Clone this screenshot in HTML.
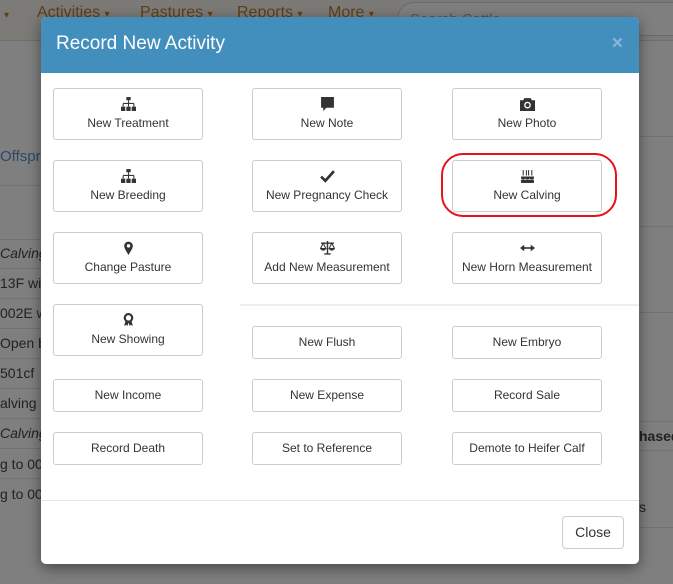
<!DOCTYPE html>
<html style="background:#7f7f7f"><head><style>
html,body{background:#7f7f7f}
body{margin:0;width:673px;height:584px;overflow:hidden;font-family:"Liberation Sans",sans-serif;position:relative}
.full{position:absolute;left:0;top:0;width:673px;height:584px;background:#7f7f7f}
.nav{position:absolute;left:0;top:0;width:673px;height:40px;background:#7c7a77;border-bottom:1px solid #6e6e6e}
.nav span{position:absolute;top:4px;color:#5e3f14;font-size:16px}
.search{position:absolute;left:397px;top:2px;width:300px;height:34px;border:1px solid #6a6a6a;border-radius:18px;background:#7f7f7f;color:#555;font-size:15px;line-height:34px;padding-left:12px;box-sizing:border-box}
.bg{position:absolute;font-size:14px;color:#222}
.ln{position:absolute;height:1px;background:#727272}
.modal{position:absolute;left:41px;top:17px;width:598px;height:547px;background:#fff;border-radius:5px;box-shadow:0 4px 14px rgba(0,0,0,.45);overflow:hidden}
.hd{height:56px;background:#428fbe;color:#fff;font-size:19px;line-height:54px;padding-left:15px;position:relative}
.x{position:absolute;right:16px;top:0;color:#8ab6d6;font-size:19px;font-weight:bold}
.b{position:absolute;width:148px;border:1px solid #ccc;border-radius:3px;background:#fff;text-align:center;font-size:12px;color:#333}
.b svg{display:block;margin:0 auto}
.tall{height:50px}
.tall svg{margin-top:8px;height:14px;width:15px}
.tall div{margin-top:5px}
.short{height:31px;line-height:31px}
.sep{position:absolute;left:199px;top:287px;width:399px;height:2px;background:#eee}
.ft{position:absolute;left:0;top:483px;width:598px;height:1px;background:#e5e5e5}
.close{position:absolute;left:521px;top:499px;width:60px;height:31px;border:1px solid #ccc;border-radius:4px;font-size:14px;line-height:31px;text-align:center;color:#333}
.red{position:absolute;left:441px;top:153px;width:172px;height:60px;border:2px solid #e3131b;border-radius:22px}
</style></head><body>
<div class="full"></div>
<div class="nav">
<span style="left:4px;font-size:10px;top:10px">▾</span>
<span style="left:37px">Activities <small style="font-size:10px">▾</small></span>
<span style="left:140px">Pastures <small style="font-size:10px">▾</small></span>
<span style="left:237px">Reports <small style="font-size:10px">▾</small></span>
<span style="left:328px">More <small style="font-size:10px">▾</small></span>
<div class="search">Search Cattle</div>
</div>
<div class="bg" style="left:0;top:148px;color:#2a4a66;font-size:15px">Offspr</div>
<div class="ln" style="left:0;top:185px;width:41px"></div>
<div class="ln" style="left:0;top:239px;width:41px"></div>
<div class="bg" style="left:0;top:245px;font-style:italic">Calving</div>
<div class="ln" style="left:0;top:268px;width:41px"></div>
<div class="bg" style="left:0;top:275px">13F wit</div>
<div class="ln" style="left:0;top:298px;width:41px"></div>
<div class="bg" style="left:0;top:305px">002E w</div>
<div class="ln" style="left:0;top:328px;width:41px"></div>
<div class="bg" style="left:0;top:335px">Open b</div>
<div class="ln" style="left:0;top:358px;width:41px"></div>
<div class="bg" style="left:0;top:365px">501cf</div>
<div class="ln" style="left:0;top:388px;width:41px"></div>
<div class="bg" style="left:0;top:395px">alving</div>
<div class="ln" style="left:0;top:418px;width:41px"></div>
<div class="bg" style="left:0;top:425px;font-style:italic">Calving</div>
<div class="ln" style="left:0;top:448px;width:41px"></div>
<div class="bg" style="left:0;top:456px">g to 00</div>
<div class="ln" style="left:0;top:478px;width:41px"></div>
<div class="bg" style="left:0;top:486px">g to 00</div>
<div class="ln" style="left:639px;top:136px;width:34px"></div>
<div class="ln" style="left:639px;top:226px;width:34px"></div>
<div class="ln" style="left:639px;top:312px;width:34px"></div>
<div class="ln" style="left:639px;top:421px;width:34px"></div>
<div class="bg" style="left:639px;top:428px;font-weight:bold">hased</div>
<div class="ln" style="left:639px;top:450px;width:34px"></div>
<div class="bg" style="left:639px;top:499px">s</div>
<div class="ln" style="left:639px;top:527px;width:34px"></div>

<div class="modal">
<div class="hd">Record New Activity<span class="x">×</span></div>
<div class="b tall" style="left:12px;top:71px"><svg viewBox="0 0 14 13"><rect x="5" y="0" width="4" height="3" fill="#333"/><path d="M7 3v3M2 6h10M2 6v3M7 6v3M12 6v3" stroke="#333" fill="none"/><rect x="0" y="9" width="4" height="4" fill="#333"/><rect x="5" y="9" width="4" height="4" fill="#333"/><rect x="10" y="9" width="4" height="4" fill="#333"/></svg><div>New Treatment</div></div>
<div class="b tall" style="left:211px;top:71px"><svg viewBox="0 0 14 13"><path d="M1 0h12v10H6l-3 3v-3H1z" fill="#333"/></svg><div>New Note</div></div>
<div class="b tall" style="left:411px;top:71px"><svg viewBox="0 0 14 13"><path d="M0 3h3l1-2h6l1 2h3v10H0z" fill="#333"/><circle cx="7" cy="7.5" r="2.5" fill="none" stroke="#fff" stroke-width="1.3"/></svg><div>New Photo</div></div>

<div class="b tall" style="left:12px;top:143px"><svg viewBox="0 0 14 13"><rect x="5" y="0" width="4" height="3" fill="#333"/><path d="M7 3v3M2 6h10M2 6v3M7 6v3M12 6v3" stroke="#333" fill="none"/><rect x="0" y="9" width="4" height="4" fill="#333"/><rect x="5" y="9" width="4" height="4" fill="#333"/><rect x="10" y="9" width="4" height="4" fill="#333"/></svg><div>New Breeding</div></div>
<div class="b tall" style="left:211px;top:143px"><svg viewBox="0 0 14 13"><path d="M1 7l4 4 8-9" stroke="#333" stroke-width="2.5" fill="none"/></svg><div>New Pregnancy Check</div></div>
<div class="b tall" style="left:411px;top:143px"><svg viewBox="0 0 14 13"><path d="M3 1v5M6 1v5M8 1v5M11 1v5" stroke="#333"/><path d="M1 7h12v2q-2 1.5-4 0q-2 1.5-4 0q-2 1.5-4 0z" fill="#333"/><rect x="1" y="10" width="12" height="3" fill="#333"/></svg><div>New Calving</div></div>

<div class="b tall" style="left:12px;top:215px"><svg viewBox="0 0 14 13"><path d="M7 13C4 8 3 6.5 3 4.5a4 4 0 018 0C11 6.5 10 8 7 13z" fill="#333"/><circle cx="7" cy="4.5" r="1.6" fill="#fff"/></svg><div>Change Pasture</div></div>
<div class="b tall" style="left:211px;top:215px"><svg viewBox="0 0 14 13"><path d="M7 0v12M4 12h6M1 2h12" stroke="#333" stroke-width="1.3" fill="none"/><path d="M3 2L0.5 7h5zM11 2l-2.5 5h5z" stroke="#333" fill="none"/><path d="M0.5 7a2.5 2 0 005 0zM8.5 7a2.5 2 0 005 0z" fill="#333"/></svg><div>Add New Measurement</div></div>
<div class="b tall" style="left:411px;top:215px"><svg viewBox="0 0 14 13"><path d="M3 6.5h8" stroke="#333" stroke-width="1.5"/><path d="M0 6.5l4-3v6zM14 6.5l-4-3v6z" fill="#333"/></svg><div>New Horn Measurement</div></div>

<div class="b tall" style="left:12px;top:287px"><svg viewBox="0 0 14 13"><circle cx="7" cy="4.5" r="3.5" fill="none" stroke="#333" stroke-width="2"/><path d="M4 8l-1 4 2-1 1 1 1-3zM10 8l1 4-2-1-1 1-1-3z" fill="#333"/></svg><div>New Showing</div></div>
<div class="sep"></div>
<div class="b short" style="left:211px;top:309px">New Flush</div>
<div class="b short" style="left:411px;top:309px">New Embryo</div>
<div class="b short" style="left:12px;top:362px">New Income</div>
<div class="b short" style="left:211px;top:362px">New Expense</div>
<div class="b short" style="left:411px;top:362px">Record Sale</div>
<div class="b short" style="left:12px;top:415px">Record Death</div>
<div class="b short" style="left:211px;top:415px">Set to Reference</div>
<div class="b short" style="left:411px;top:415px">Demote to Heifer Calf</div>
<div class="ft"></div>
<div class="close">Close</div>
</div>
<div class="red"></div>
</body></html>
